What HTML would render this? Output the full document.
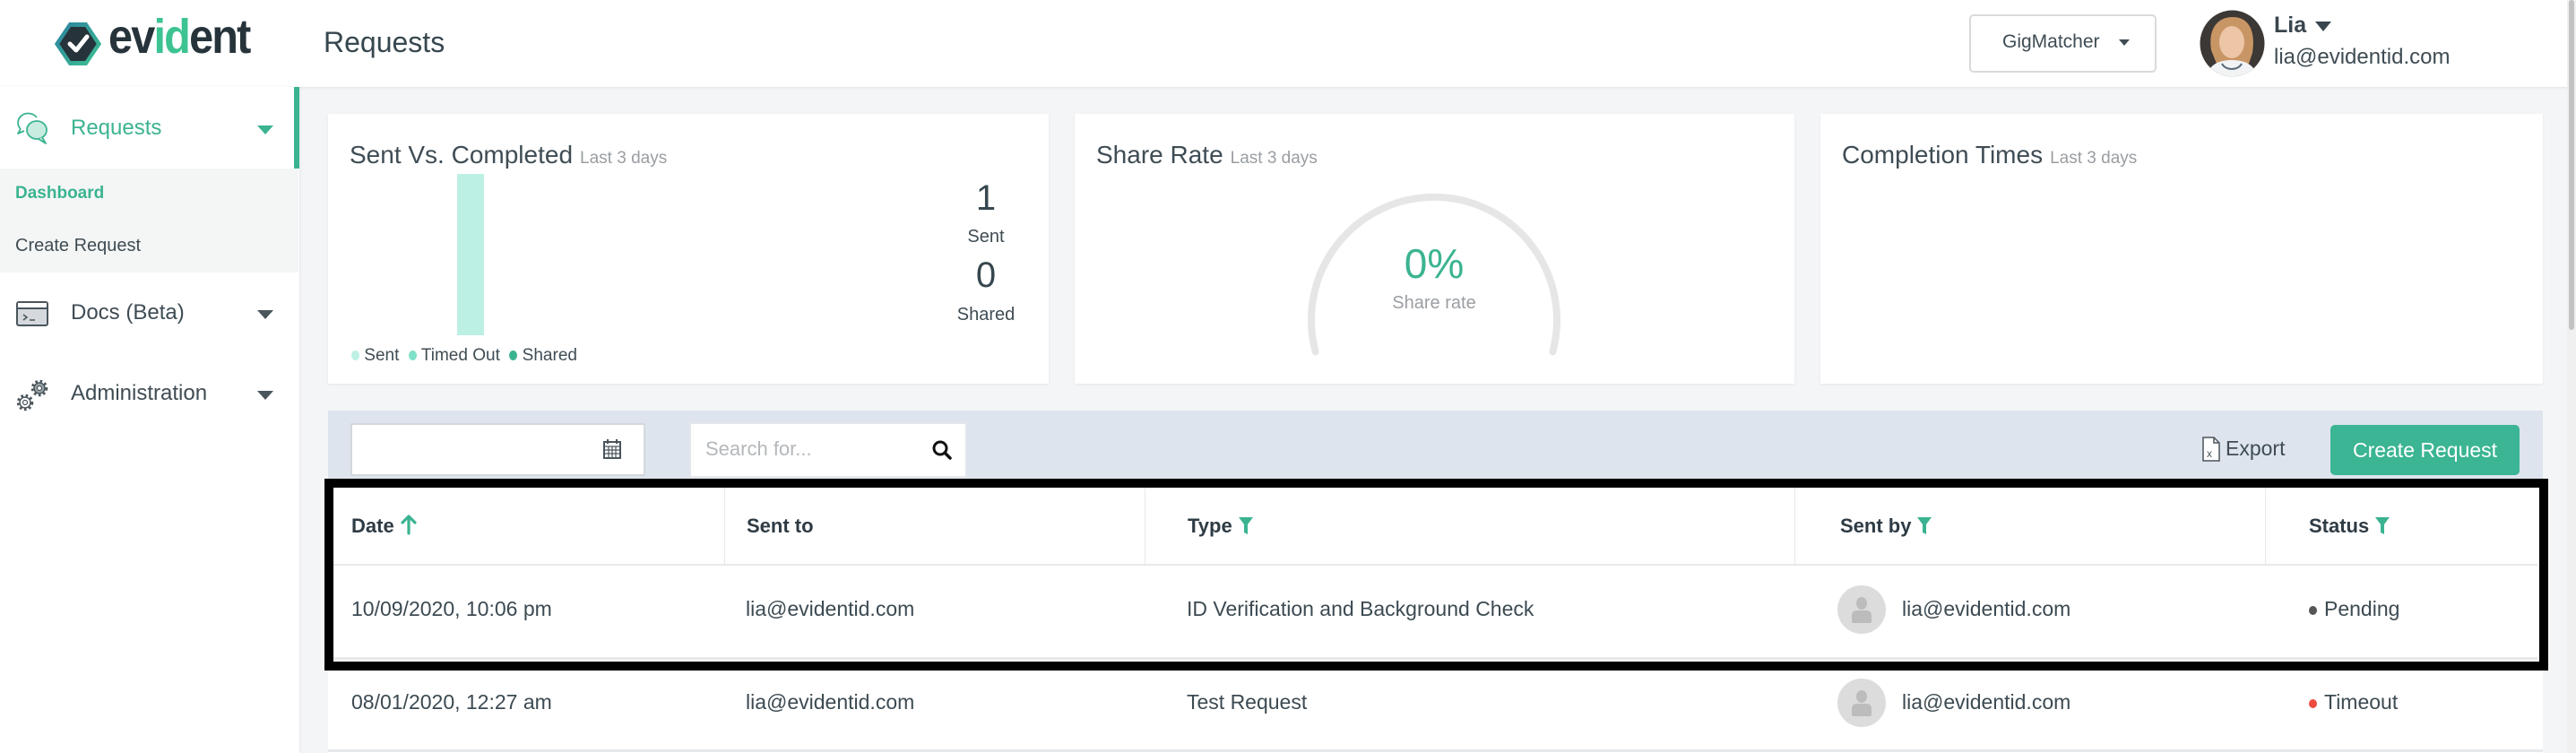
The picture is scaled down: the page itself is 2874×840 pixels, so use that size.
<!DOCTYPE html>
<html><head><meta charset="utf-8"><style>
*{margin:0;padding:0;box-sizing:border-box}
body{width:2874px;height:840px;overflow:hidden;background:#f4f5f7;font-family:"Liberation Sans",sans-serif;color:#3c4a52;position:relative}
.a{position:absolute;white-space:nowrap}
.card{position:absolute;background:#fff;box-shadow:0 1px 3px rgba(0,0,0,.06)}
.ct{position:absolute;left:24px;top:28px;font-size:28px;color:#3f4c54}
.ct span{font-size:19px;color:#9a9ea2;margin-left:8px}
.th{position:absolute;top:0;height:84px;line-height:84px;font-weight:bold;font-size:22px;color:#2e3b44}
.th svg{vertical-align:-3px;margin-left:6px}
.td{font-size:23px;color:#3c4a52}
.tri{width:0;height:0;border-left:9px solid transparent;border-right:9px solid transparent;border-top:10px solid #4a555c}
</style></head><body>
<!-- header -->
<div class="a" style="left:0;top:0;width:2874px;height:97px;background:#fff;box-shadow:0 1px 3px rgba(0,0,0,.08)"></div>
<svg class="a" style="left:56px;top:24px" width="62" height="50" viewBox="0 0 62 50">
<defs><linearGradient id="g" x1="0" y1="0" x2="1" y2="1"><stop offset="0" stop-color="#2c7fa0"/><stop offset="1" stop-color="#3cc391"/></linearGradient></defs>
<polygon points="20,1 42,1 60,25 42,49 20,49 2,25" fill="url(#g)" transform="translate(31 25) scale(.9 1) translate(-31 -25)"/>
<polygon points="22,6 40,6 54,25 40,44 22,44 8,25" fill="#26333a" transform="translate(31 25) scale(.9 1) translate(-31 -25)"/>
<path d="M22 25 L29 32 L41 17" stroke="#fff" stroke-width="5" fill="none" stroke-linecap="round" stroke-linejoin="round"/>
</svg>
<div class="a" style="left:121px;top:10px;font-size:54px;font-weight:bold;letter-spacing:-2px;color:#26333a;transform:scaleX(.9);transform-origin:left">ev<span style="color:#3cc391">id</span>ent</div>
<div class="a" style="left:361px;top:29px;font-size:32px;color:#37474f">Requests</div>
<div class="a" style="left:2197px;top:16px;width:209px;height:65px;border:2px solid #d8dadc;border-radius:5px;background:#fff"></div>
<div class="a" style="left:2234px;top:35px;font-size:21px;color:#3f4c54">GigMatcher</div>
<div class="a tri" style="left:2364px;top:44px;border-width:7px 6px 0 6px;border-top-color:#3f4c54"></div>
<svg class="a" style="left:2453px;top:11px" width="75" height="75" viewBox="0 0 75 75">
<defs><clipPath id="c"><ellipse cx="37.5" cy="37.5" rx="36" ry="37"/></clipPath></defs>
<g clip-path="url(#c)"><rect width="75" height="75" fill="#3b3835"/>
<path d="M14 45 C10 20 22 8 38 8 C55 8 64 22 60 48 L56 60 L20 60 Z" fill="#c89565"/>
<ellipse cx="37" cy="36" rx="14" ry="18" fill="#ecc6a6"/>
<path d="M8 75 C12 60 24 56 37 56 C50 56 62 60 66 75 Z" fill="#f1f3f5"/>
<path d="M26 60 C30 68 44 68 48 60" stroke="#5a6a78" stroke-width="2" fill="none"/></g></svg>
<div class="a" style="left:2537px;top:14px;font-size:25px;font-weight:bold;color:#3a464d">Lia</div>
<div class="a tri" style="left:2583px;top:24px;border-width:11px 9px 0 9px;border-top-color:#3a464d"></div>
<div class="a" style="left:2537px;top:50px;font-size:24px;color:#3f4c54">lia@evidentid.com</div>
<!-- scrollbar -->
<div class="a" style="left:2864px;top:0;width:10px;height:840px;background:#f0f0f0"></div>
<div class="a" style="left:2866px;top:0;width:6px;height:368px;background:#c2c2c2;border-radius:3px"></div>
<!-- sidebar -->
<div class="a" style="left:0;top:97px;width:334px;height:743px;background:#fff;box-shadow:1px 0 3px rgba(0,0,0,.06)"></div>
<div class="a" style="left:328px;top:97px;width:6px;height:91px;background:#3bb391"></div>
<div class="a" style="left:0;top:188px;width:333px;height:116px;background:#f4f6f5"></div>
<svg class="a" style="left:17px;top:124px" width="40" height="38" viewBox="0 0 40 38">
<path d="M6 20 C2 16 2 9 7 5 C12 1 20 2 24 7" fill="none" stroke="#3bb391" stroke-width="1.8"/>
<path d="M6 20 L3 25 L10 22" fill="none" stroke="#3bb391" stroke-width="1.8" stroke-linejoin="round"/>
<ellipse cx="24" cy="21" rx="11" ry="10" fill="#c9ece1" stroke="#3bb391" stroke-width="1.8"/>
<path d="M30 29 L34 36 L26 31" fill="#c9ece1" stroke="#3bb391" stroke-width="1.8" stroke-linejoin="round"/></svg>
<div class="a" style="left:79px;top:129px;font-size:24px;color:#3bb391">Requests</div>
<div class="a tri" style="left:287px;top:140px;border-top-color:#3bb391"></div>
<div class="a" style="left:17px;top:205px;font-size:19px;font-weight:bold;color:#3bb391">Dashboard</div>
<div class="a" style="left:17px;top:263px;font-size:20px;color:#3f4c54">Create Request</div>
<svg class="a" style="left:18px;top:336px" width="36" height="28" viewBox="0 0 36 28"><rect x="1" y="1" width="34" height="26" rx="2" fill="#d5d9de" stroke="#4a555c" stroke-width="2"/><rect x="2" y="2" width="32" height="6" fill="#fff"/><line x1="1" y1="8" x2="35" y2="8" stroke="#4a555c" stroke-width="2"/><path d="M8 15 l4 3 l-4 3 M15 21 h6" stroke="#4a555c" stroke-width="1.6" fill="none"/></svg>
<div class="a" style="left:79px;top:335px;font-size:24px;color:#3f4c54">Docs (Beta)</div>
<div class="a tri" style="left:287px;top:346px"></div>
<svg class="a" style="left:17px;top:422px" width="40" height="38" viewBox="0 0 40 38">
<g stroke="#4a555c" stroke-width="3.5" stroke-dasharray="2.5 2.6"><circle cx="27" cy="11" r="7.5" fill="none"/></g>
<circle cx="27" cy="11" r="6" fill="#9aa3a8" stroke="#4a555c" stroke-width="1.5"/><circle cx="27" cy="11" r="2.5" fill="#fff" stroke="#4a555c" stroke-width="1.2"/>
<g stroke="#4a555c" stroke-width="3.5" stroke-dasharray="2.5 2.6"><circle cx="11" cy="27" r="7.5" fill="none"/></g>
<circle cx="11" cy="27" r="6" fill="#fff" stroke="#4a555c" stroke-width="1.5"/><circle cx="11" cy="27" r="2.5" fill="#fff" stroke="#4a555c" stroke-width="1.2"/></svg>
<div class="a" style="left:79px;top:425px;font-size:24px;color:#3f4c54">Administration</div>
<div class="a tri" style="left:287px;top:436px"></div>
<!-- card 1 -->
<div class="card" style="left:366px;top:127px;width:804px;height:301px">
<div class="ct" style="top:30px">Sent Vs. Completed<span>Last 3 days</span></div>
<div class="a" style="left:144px;top:67px;width:30px;height:180px;background:#bdf0e4"></div>
<div class="a" style="left:704px;top:72px;width:60px;text-align:center;font-size:40px;color:#37474f">1</div>
<div class="a" style="left:704px;top:126px;width:60px;text-align:center;font-size:20px;color:#3f4c54">Sent</div>
<div class="a" style="left:704px;top:158px;width:60px;text-align:center;font-size:40px;color:#37474f">0</div>
<div class="a" style="left:694px;top:213px;width:80px;text-align:center;font-size:20px;color:#3f4c54">Shared</div>
<div class="a" style="left:26px;top:259px;font-size:19px;color:#3f4c54"><span style="display:inline-block;width:9px;height:11px;border-radius:50%;background:#bdf0e4"></span> Sent&nbsp; <span style="display:inline-block;width:9px;height:11px;border-radius:50%;background:#7fe0c8"></span> Timed Out&nbsp; <span style="display:inline-block;width:9px;height:11px;border-radius:50%;background:#3bb391"></span> Shared</div>
</div>
<!-- card 2 -->
<div class="card" style="left:1199px;top:127px;width:803px;height:301px">
<div class="ct" style="top:30px">Share Rate<span>Last 3 days</span></div>
<svg class="a" style="left:0;top:0" width="803" height="301"><path d="M 268.7 265.5 A 137 137 0 1 1 533.3 265.5" fill="none" stroke="#e6e6e6" stroke-width="8" stroke-linecap="round"/></svg>
<div class="a" style="left:301px;top:140px;width:200px;text-align:center;font-size:46px;color:#3bb391">0%</div>
<div class="a" style="left:301px;top:200px;width:200px;text-align:center;font-size:20px;color:#9a9ea2">Share rate</div>
</div>
<!-- card 3 -->
<div class="card" style="left:2031px;top:127px;width:806px;height:301px">
<div class="ct" style="top:30px">Completion Times<span>Last 3 days</span></div>
</div>
<!-- toolbar -->
<div class="a" style="left:366px;top:458px;width:2471px;height:76px;background:#dde4ed"></div>
<div class="a" style="left:391px;top:472px;width:329px;height:59px;background:#fff;border:2px solid #d4d8dc"></div>
<svg class="a" style="left:672px;top:489px" width="22" height="24" viewBox="0 0 22 24"><rect x="2" y="4" width="18" height="18" fill="#fff" stroke="#4a555c" stroke-width="2"/><path d="M2 9h18M2 13h18M2 17h18M7 9v13M11 9v13M15 9v13" stroke="#4a555c" stroke-width="1.2"/><path d="M6 1v5M16 1v5" stroke="#4a555c" stroke-width="2"/></svg>
<div class="a" style="left:769px;top:471px;width:310px;height:62px;background:#fff;border:2px solid #e3e7eb"></div>
<div class="a" style="left:787px;top:488px;font-size:22px;color:#b4b8bb">Search for...</div>
<svg class="a" style="left:1040px;top:491px" width="22" height="22" viewBox="0 0 22 22"><circle cx="9" cy="9" r="7" fill="none" stroke="#111" stroke-width="3"/><path d="M14 14 L20 20" stroke="#111" stroke-width="3.5" stroke-linecap="round"/></svg>
<svg class="a" style="left:2456px;top:487px" width="22" height="28" viewBox="0 0 22 28"><path d="M2 1h12l6 6v20H2z" fill="#fff" stroke="#4a555c" stroke-width="1.5"/><path d="M14 1v6h6" fill="none" stroke="#4a555c" stroke-width="1.5"/><text x="6" y="23" font-size="12" font-family="Liberation Sans" fill="#4a555c">x</text></svg>
<div class="a" style="left:2483px;top:487px;font-size:23px;color:#3f4c54">Export</div>
<div class="a" style="left:2600px;top:474px;width:211px;height:56px;background:#3bb593;border-radius:5px;color:#fff;font-size:23px;text-align:center;line-height:56px">Create Request</div>
<!-- table -->
<div class="a" style="left:366px;top:534px;width:2471px;height:306px;background:#fff"></div>
<div class="a" style="left:372px;top:629px;width:2459px;height:2px;background:#e6e8ea"></div>
<div class="a" style="left:372px;top:733px;width:2459px;height:3px;background:#e6e8ea"></div>
<div class="a" style="left:366px;top:836px;width:2471px;height:3px;background:#e6e8ea"></div>
<div class="a" style="left:808px;top:544px;width:1px;height:85px;background:#e6e8ea"></div>
<div class="a" style="left:1277px;top:544px;width:1px;height:85px;background:#e6e8ea"></div>
<div class="a" style="left:2002px;top:544px;width:1px;height:85px;background:#e6e8ea"></div>
<div class="a" style="left:2527px;top:544px;width:1px;height:85px;background:#e6e8ea"></div>
<div class="a" style="left:0;top:545px;width:2874px;height:84px">
<div class="th" style="left:392px">Date<svg width="20" height="24" viewBox="0 0 20 24"><path d="M10 22V4M3 10L10 3L17 10" stroke="#3bb391" stroke-width="3.2" fill="none" stroke-linecap="round" stroke-linejoin="round"/></svg></div>
<div class="th" style="left:833px">Sent to</div>
<div class="th" style="left:1325px">Type<svg width="18" height="22" viewBox="0 0 18 22"><path d="M1 2H17L11 10V21L7 19V10Z" fill="#3bb391"/></svg></div>
<div class="th" style="left:2053px">Sent by<svg width="18" height="22" viewBox="0 0 18 22"><path d="M1 2H17L11 10V21L7 19V10Z" fill="#3bb391"/></svg></div>
<div class="th" style="left:2576px">Status<svg width="18" height="22" viewBox="0 0 18 22"><path d="M1 2H17L11 10V21L7 19V10Z" fill="#3bb391"/></svg></div>
</div>
<div class="a td" style="left:392px;top:666px">10/09/2020, 10:06 pm</div>
<div class="a td" style="left:832px;top:666px">lia@evidentid.com</div>
<div class="a td" style="left:1324px;top:666px">ID Verification and Background Check</div>
<div class="a" style="left:2050px;top:653px;width:54px;height:54px;border-radius:50%;background:#dcdcdc"></div>
<div class="a" style="left:2071px;top:666px;width:12px;height:14px;border-radius:50%;background:#bcbcbc"></div>
<div class="a" style="left:2066px;top:681px;width:22px;height:14px;border-radius:5px 5px 2px 2px;background:#bcbcbc"></div>
<div class="a td" style="left:2122px;top:666px">lia@evidentid.com</div>
<div class="a" style="left:2576px;top:676px;width:9px;height:10px;border-radius:50%;background:#555"></div>
<div class="a td" style="left:2593px;top:666px">Pending</div>
<div class="a td" style="left:392px;top:770px">08/01/2020, 12:27 am</div>
<div class="a td" style="left:832px;top:770px">lia@evidentid.com</div>
<div class="a td" style="left:1324px;top:770px">Test Request</div>
<div class="a" style="left:2050px;top:757px;width:54px;height:54px;border-radius:50%;background:#dcdcdc"></div>
<div class="a" style="left:2071px;top:770px;width:12px;height:14px;border-radius:50%;background:#bcbcbc"></div>
<div class="a" style="left:2066px;top:785px;width:22px;height:14px;border-radius:5px 5px 2px 2px;background:#bcbcbc"></div>
<div class="a td" style="left:2122px;top:770px">lia@evidentid.com</div>
<div class="a" style="left:2576px;top:780px;width:9px;height:10px;border-radius:50%;background:#ef4b3f"></div>
<div class="a td" style="left:2593px;top:770px">Timeout</div>
<!-- highlight border -->
<div class="a" style="left:362px;top:534px;width:2481px;height:214px;border:10px solid #000"></div>
</body></html>
